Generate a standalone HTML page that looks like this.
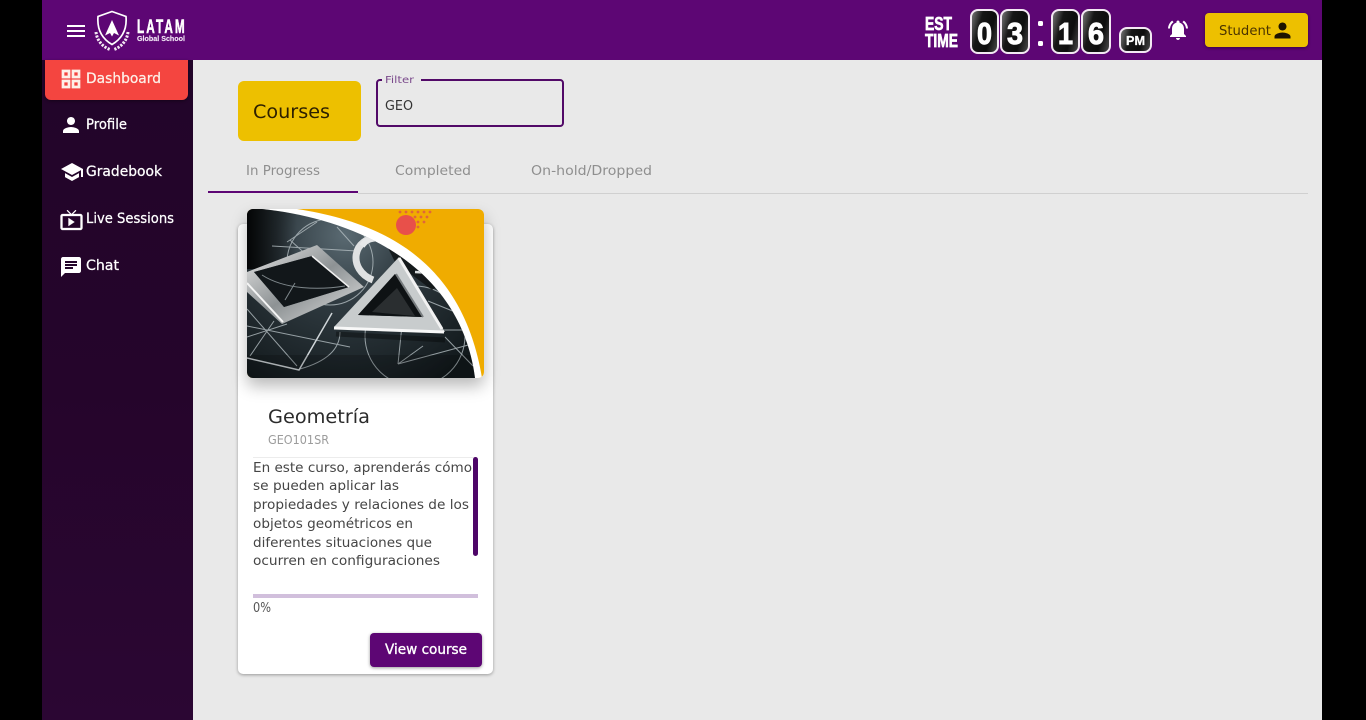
<!DOCTYPE html>
<html lang="en"><head><meta charset="utf-8"><title>Courses</title>
<style>
html,body{margin:0;padding:0;width:1366px;height:720px;overflow:hidden;background:#000}
div{position:absolute;box-sizing:border-box}
svg{position:absolute;left:0;top:0}
text{font-family:"DejaVu Sans","Liberation Sans",sans-serif}
.b{font-family:"Liberation Sans",sans-serif;font-weight:700}
.digit{border:2px solid #f3e9f3;border-radius:8px;background:linear-gradient(105deg,#777,#161616 32%,#0d0d0d 68%,#4a4a4a)}
</style></head><body>
<div style="left:42px;top:0;width:1280px;height:720px;background:#e9e9e9"></div>
<div style="left:42px;top:60px;width:151px;height:660px;background:linear-gradient(#22052a,#25052b 50%,#2b0633)"></div>
<div style="left:42px;top:0;width:1280px;height:60px;background:#5d0674"></div>
<div style="left:45px;top:60px;width:143px;height:40px;background:#f44540;border-radius:0 0 6px 6px;box-shadow:0 1px 3px rgba(0,0,0,.4)"></div>
<div style="left:238px;top:81px;width:123px;height:60px;background:#edc000;border-radius:6px"></div>
<div style="left:376px;top:79px;width:188px;height:48px;border:2px solid #520a68;border-radius:4px"></div>
<div style="left:382px;top:76px;width:39px;height:6px;background:#e9e9e9"></div>
<div style="left:358px;top:193px;width:950px;height:1px;background:#d0d0d0"></div>
<div style="left:208px;top:191px;width:150px;height:2px;background:#5d0674"></div>
<div style="left:238px;top:224px;width:255px;height:450px;background:#fff;border-radius:5px;box-shadow:0 1px 3px rgba(0,0,0,.35)"></div>
<div style="left:247px;top:209px;width:237px;height:169px;border-radius:6px;box-shadow:0 8px 16px rgba(0,0,0,.28)"></div>
<div style="left:253px;top:457px;width:222px;height:1px;background:#ececec"></div>
<div style="left:473px;top:457px;width:5px;height:99px;background:#4e0668;border-radius:3px"></div>
<div style="left:253px;top:594px;width:225px;height:4px;background:#d1bfdc"></div>
<div style="left:370px;top:633px;width:112px;height:34px;background:#5d0674;border-radius:4px;box-shadow:0 1px 3px rgba(0,0,0,.4)"></div>
<div style="left:1205px;top:13px;width:103px;height:34px;background:#edc000;border-radius:4px;box-shadow:0 1px 3px rgba(0,0,0,.4)"></div>
<div class="digit" style="left:970px;top:9px;width:29px;height:45px"></div>
<div class="digit" style="left:1000px;top:9px;width:30px;height:45px"></div>
<div class="digit" style="left:1051px;top:9px;width:29px;height:45px"></div>
<div class="digit" style="left:1081px;top:9px;width:30px;height:45px"></div>
<div class="digit" style="left:1119px;top:27px;width:33px;height:26px"></div>

<svg width="1366" height="720" viewBox="0 0 1366 720" xmlns="http://www.w3.org/2000/svg">
<defs>
<clipPath id="ic"><rect x="247" y="209" width="237" height="169" rx="6"/></clipPath>
<clipPath id="ph2"><path d="M247 209 H262 C350 218 460 262 475 378 H247 Z"/></clipPath>
<radialGradient id="ph" gradientUnits="userSpaceOnUse" cx="345" cy="235" r="170"><stop offset="0" stop-color="#5a6a72"/><stop offset=".4" stop-color="#2f3a40"/><stop offset="1" stop-color="#12191c"/></radialGradient>
<linearGradient id="sv" x1="0" y1="0" x2="1" y2="1"><stop offset="0" stop-color="#e8e8e8"/><stop offset=".5" stop-color="#8d9294"/><stop offset="1" stop-color="#e4e4e4"/></linearGradient>
<linearGradient id="tl" x1="0" y1="0" x2="1" y2="0"><stop offset="0" stop-color="#000" stop-opacity=".9"/><stop offset="1" stop-color="#000" stop-opacity="0"/></linearGradient>
</defs>

<!-- hamburger -->
<g fill="#fff"><rect x="67" y="25" width="18" height="2"/><rect x="67" y="30" width="18" height="2"/><rect x="67" y="35" width="18" height="2"/></g>

<!-- logo -->
<path d="M112 11.500 L126 16.500 C127 28 123 38 112 44.500 C101 38 97 28 98 16.500 Z" fill="none" stroke="#fff" stroke-width="1.700"/>
<path d="M112 20 L119 35.500 L114 33 L112 36.500 L110 33 L105 35.500 Z" fill="#fff"/>
<path d="M96 32 C97 41 103 47 110 49.500 M128 32 C127 41 121 47 114 49.500" fill="none" stroke="#f3e9f3" stroke-width="3" stroke-dasharray="2.200 1.300"/>
<text class="b" transform="translate(137 33) scale(.62 1)" font-size="19" textLength="77" lengthAdjust="spacing" fill="#fff" stroke="#fff" stroke-width=".6">LATAM</text>
<text class="b" x="137" y="41" font-size="7.500" textLength="48" lengthAdjust="spacingAndGlyphs" fill="#f0e4f4" stroke="#f0e4f4" stroke-width=".15">Global School</text>

<!-- sidebar icons -->
<path transform="translate(59 67)" fill="#fdf0e8" stroke="#fdf0e8" stroke-width=".7" d="M3 3v8h8V3H3zm6 6H5V5h4v4zm-6 4v8h8v-8H3zm6 6H5v-4h4v4zm4-16v8h8V3h-8zm6 6h-4V5h4v4zm-6 4v8h8v-8h-8zm6 6h-4v-4h4v4z"/>
<path transform="translate(59 113)" fill="#fff" d="M12 12c2.210 0 4-1.790 4-4s-1.790-4-4-4-4 1.790-4 4 1.790 4 4 4zm0 2c-2.670 0-8 1.340-8 4v2h16v-2c0-2.660-5.330-4-8-4z"/>
<path transform="translate(60 160)" fill="#fff" d="M5 13.180v4L12 21l7-3.820v-4L12 17l-7-3.820zM12 3L1 9l11 6 9-4.910V17h2V9L12 3z"/>
<path transform="translate(59.500 208)" fill="#fff" stroke="#fff" stroke-width=".3" d="M21 6h-7.590l3.290-3.290L16 2l-4 4-4-4-.71.71L10.590 6H3c-1.100 0-2 .89-2 2v12c0 1.100.9 2 2 2h18c1.100 0 2-.9 2-2V8c0-1.110-.9-2-2-2zm0 14H3V8h18v12zM9 10v8l6-4z"/>
<path transform="translate(59 255)" fill="#fff" d="M20 2H4c-1.100 0-1.990.9-1.990 2L2 22l4-4h14c1.100 0 2-.9 2-2V4c0-1.100-.9-2-2-2zM6 9h12v2H6V9zm8 5H6v-2h8v2zm4-6H6V6h12v2z"/>

<!-- sidebar text -->
<g fill="#fff" stroke="#fff" stroke-width=".25" font-size="14">
<text x="86" y="83" textLength="75" lengthAdjust="spacingAndGlyphs" fill="#fdf0e8" stroke="#fdf0e8">Dashboard</text>
<text x="86" y="129" textLength="41" lengthAdjust="spacingAndGlyphs">Profile</text>
<text x="86" y="176" textLength="76" lengthAdjust="spacingAndGlyphs">Gradebook</text>
<text x="86" y="223" textLength="88" lengthAdjust="spacingAndGlyphs">Live Sessions</text>
<text x="86" y="270" textLength="33" lengthAdjust="spacingAndGlyphs">Chat</text>
</g>

<!-- clock -->
<g fill="#fff" stroke="#fff">
<text class="b" x="925" y="30" font-size="18.500" textLength="27" lengthAdjust="spacingAndGlyphs" stroke-width=".7">EST</text>
<text class="b" x="925" y="47" font-size="18.500" textLength="33" lengthAdjust="spacingAndGlyphs" stroke-width=".7">TIME</text>
<text class="b" x="977" y="44" font-size="31" textLength="15" lengthAdjust="spacingAndGlyphs" stroke-width="1">0</text>
<text class="b" x="1007" y="44" font-size="31" textLength="16" lengthAdjust="spacingAndGlyphs" stroke-width="1">3</text>
<text class="b" x="1058" y="44" font-size="31" textLength="15" lengthAdjust="spacingAndGlyphs" stroke-width="1">1</text>
<text class="b" x="1088" y="44" font-size="31" textLength="16" lengthAdjust="spacingAndGlyphs" stroke-width="1">6</text>
<rect x="1038" y="21" width="5" height="5" rx="1.500" stroke="none"/><rect x="1038" y="41" width="5" height="5" rx="1.500" stroke="none"/>
<text class="b" x="1126" y="45" font-size="13" textLength="19" lengthAdjust="spacingAndGlyphs" stroke-width=".3">PM</text>
</g>
<path transform="translate(1166 18)" fill="#fff" d="M7.580 4.080L6.150 2.650C3.750 4.480 2.170 7.300 2.030 10.500h2c.15-2.650 1.510-4.970 3.550-6.420zm12.390 6.420h2c-.15-3.200-1.730-6.020-4.120-7.850l-1.420 1.430c2.020 1.450 3.390 3.770 3.540 6.420zM18 11c0-3.070-1.640-5.640-4.500-6.320V4c0-.83-.67-1.500-1.500-1.500s-1.500.67-1.500 1.500v.68C7.630 5.360 6 7.920 6 11v5l-2 2v1h16v-1l-2-2v-5zm-6 11c.14 0 .27-.01.4-.04.65-.14 1.180-.58 1.440-1.180.1-.24.15-.5.15-.78h-4c.01 1.100.9 2 2.010 2z"/>
<text x="1219" y="35" font-size="13.500" textLength="52" lengthAdjust="spacingAndGlyphs" fill="#4a3300">Student</text>
<path transform="translate(1270.500 18.500)" fill="#1d1400" d="M12 12c2.210 0 4-1.790 4-4s-1.790-4-4-4-4 1.790-4 4 1.790 4 4 4zm0 2c-2.670 0-8 1.340-8 4v2h16v-2c0-2.660-5.330-4-8-4z"/>

<!-- header row -->
<text x="253" y="118" font-size="19" textLength="77" lengthAdjust="spacingAndGlyphs" fill="#2d2000">Courses</text>
<text x="385" y="83" font-size="9.500" textLength="29" lengthAdjust="spacingAndGlyphs" fill="#7b4a8c">Filter</text>
<text x="385" y="110" font-size="13" textLength="28" lengthAdjust="spacingAndGlyphs" fill="#333">GEO</text>
<g fill="#8f8f8f" font-size="13.500">
<text x="246" y="175" textLength="74" lengthAdjust="spacingAndGlyphs">In Progress</text>
<text x="395" y="175" textLength="76" lengthAdjust="spacingAndGlyphs">Completed</text>
<text x="531" y="175" textLength="121" lengthAdjust="spacingAndGlyphs">On-hold/Dropped</text>
</g>

<!-- course image -->
<g clip-path="url(#ic)">
<rect x="247" y="209" width="237" height="169" fill="#f0ac00"/>
<path d="M247 209 H297 C380 222 462 258 482 378 H247 Z" fill="#fff"/>
<g clip-path="url(#ph2)">
<rect x="247" y="209" width="237" height="169" fill="url(#ph)"/>
<rect x="247" y="209" width="50" height="60" fill="url(#tl)"/>
<g fill="none" stroke="#b4bec2" stroke-width="1" opacity=".8">
<circle cx="330" cy="262" r="43"/>
<path d="M272 246 L357 251 M287 242 L317 222 M337 227 L354 246"/>
<path d="M247 309 L297 366 M247 337 L287 324 M247 326 L350 347 M250 356 L274 321 M290 240 L340 285"/>
<path d="M300 369 C325 362 340 350 340 332"/>
<circle cx="415" cy="336" r="50"/>
<path d="M398 364 L472 344 M398 364 L405 296 M398 364 L423 346 M428 301 L460 314 M445 337 L473 366 M435 330 L472 330"/>
</g>
<path d="M247 358 L299 370 L332 313" fill="none" stroke="#cfd5d8" stroke-width="1.500"/>
<rect x="247" y="355" width="240" height="23" fill="#000" opacity=".18"/>
<!-- C ring -->
<path d="M380 238 C352 236 347 270 373 280" fill="none" stroke="#dfe1e2" stroke-width="7"/>
<path d="M380 232 H470 V262 L432 290 L395 262 Z" fill="#101415" opacity=".85"/>
<path d="M380 238 C372 237 366 240 362 246" fill="none" stroke="#e6e8e9" stroke-width="6"/>
<path d="M415 272 L432 273 M418 266 L428 262" stroke="#d9dcdd" stroke-width="2.500" fill="none"/>
<!-- square frame -->
<path fill-rule="evenodd" d="M247 272 L317 245 L364 287 L282 324 L247 292 Z M254 272 L312 256 L349 287 L284 307 Z" fill="url(#sv)"/>
<path d="M254 272 L312 256 L349 287 L284 307 Z" fill="#12171a"/>
<path d="M262 275 C285 290 320 290 345 286 M285 300 L295 283" fill="none" stroke="#7f888c" stroke-width="1"/>
<path d="M247 283 L283 322" stroke="#f4f4f4" stroke-width="2" fill="none"/>
<path d="M312 256 L349 287" stroke="#f0f0f0" stroke-width="1.500" fill="none"/>
<!-- triangle -->
<path fill-rule="evenodd" d="M399 257 L445 332 L334 327 Z M395 274 L358 315 L423 317 Z" fill="#c8cccd"/>
<path d="M395 274 L358 315 L423 317 Z" fill="#0e1214"/>
<path d="M372 312 L397 288 L415 316 Z" fill="#2a2e30"/>
<path d="M334 328 L444 332" stroke="#f8f8f8" stroke-width="3" fill="none"/>
<path d="M399 258 L442 329" stroke="#f2f2f2" stroke-width="3" fill="none"/>
<path d="M396 274 L423 317" stroke="#777c7e" stroke-width="2" fill="none"/>
<path d="M336 334 L445 340" stroke="#000" stroke-width="5" opacity=".35" fill="none"/>
</g>
<circle cx="406" cy="225" r="10" fill="#e8504a"/>
<g fill="#e0663a"><circle cx="400" cy="212" r="1.400"/><circle cx="406" cy="212" r="1.400"/><circle cx="412" cy="212" r="1.400"/><circle cx="418" cy="212" r="1.400"/><circle cx="424" cy="212" r="1.400"/><circle cx="430" cy="212" r="1.400"/><circle cx="415" cy="217" r="1.400"/><circle cx="421" cy="217" r="1.400"/><circle cx="427" cy="217" r="1.400"/><circle cx="418" cy="222" r="1.400"/><circle cx="424" cy="222" r="1.400"/><circle cx="418" cy="227" r="1.400"/></g>
</g>

<!-- card text -->
<text x="268" y="423" font-size="18.500" textLength="102" lengthAdjust="spacingAndGlyphs" fill="#2b2b2b">Geometría</text>
<text x="268" y="444" font-size="12.500" textLength="61" lengthAdjust="spacingAndGlyphs" fill="#9c9c9c">GEO101SR</text>
<g font-size="13" fill="#454545">
<text x="253" y="472" textLength="219" lengthAdjust="spacingAndGlyphs">En este curso, aprenderás cómo</text>
<text x="253" y="490" textLength="146" lengthAdjust="spacingAndGlyphs">se pueden aplicar las</text>
<text x="253" y="509" textLength="216" lengthAdjust="spacingAndGlyphs">propiedades y relaciones de los</text>
<text x="253" y="528" textLength="160" lengthAdjust="spacingAndGlyphs">objetos geométricos en</text>
<text x="253" y="547" textLength="179" lengthAdjust="spacingAndGlyphs">diferentes situaciones que</text>
<text x="253" y="565" textLength="187" lengthAdjust="spacingAndGlyphs">ocurren en configuraciones</text>
</g>
<text x="253" y="612" font-size="13" textLength="18" lengthAdjust="spacingAndGlyphs" fill="#555">0%</text>
<text x="385" y="654" font-size="14" stroke="#fff" stroke-width=".35" textLength="82" lengthAdjust="spacingAndGlyphs" fill="#fff">View course</text>
</svg>
</body></html>
